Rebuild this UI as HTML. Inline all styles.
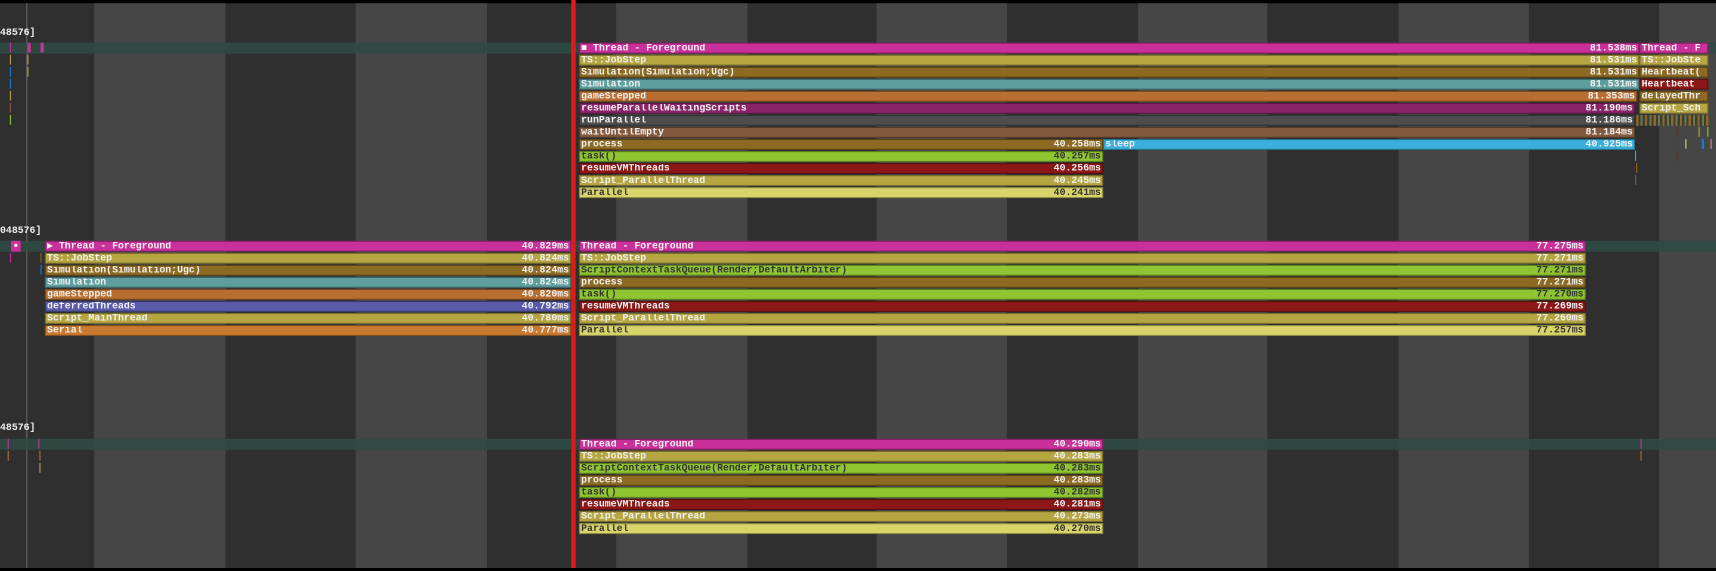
<!DOCTYPE html>
<html><head><meta charset="utf-8"><style>
html,body{margin:0;padding:0;background:#000;overflow:hidden}
#wrap{position:absolute;left:0;top:0;width:1716px;height:571px;overflow:hidden;background:#000}
#s{position:absolute;left:0;top:0;width:1568px;height:522px;transform:scale(1.0944,1.0944);transform-origin:0 0;overflow:hidden}
#bg2{position:absolute;left:0;top:3px;width:1568px;height:516px;background:#2f2f2f}
.L{position:absolute;top:3px;height:516px;background:#464646}
.b{position:absolute;height:10px;box-sizing:border-box;border:1px solid rgba(0,0,0,.35);font:bold 9px/8px "Liberation Mono",monospace;color:#f2f2f2;white-space:nowrap;overflow:hidden;padding-left:1px}
.b i{font-style:normal;position:absolute;right:1px;top:0}
.d{color:#333}
.t{position:absolute;left:0;height:10px;width:1568px;background:#2f4a44;opacity:.9}
.lbl{position:absolute;left:0;font:bold 9px "Liberation Mono",monospace;color:#eee}
.v{position:absolute;width:1px;height:9px}
.pk{background:#c9309a}.ol{background:#b5a642}.br{background:#8c6a22}.tl{background:#5e9e9e}.or{background:#b86e30}.pu{background:#8a2468}.gy{background:#4d4d4d}.wu{background:#845a3e}.gr{background:#8fc530}.rd{background:#8b1717}.ly{background:#d9d46a}.sk{background:#3aafdc}.dt{background:#5a5aaa}.se{background:#c87a30}
</style></head><body><div id="wrap"><div id="s">
<div id="bg2"></div>
<div class="L" style="left:86px;width:120px"></div>
<div class="L" style="left:325px;width:120px"></div>
<div class="L" style="left:563px;width:120px"></div>
<div class="L" style="left:801px;width:119px"></div>
<div class="L" style="left:1040px;width:118px"></div>
<div class="L" style="left:1278px;width:119px"></div>
<div class="L" style="left:1516px;width:120px"></div>
<div style="position:absolute;left:24px;top:3px;width:1px;height:516px;background:#666"></div>

<div class="lbl" style="top:25px">48576]</div>
<div class="t" style="top:39px"></div>
<div class="v pk" style="left:9px;top:39px"></div><div class="v pk" style="left:25px;top:39px;width:3px"></div><div class="v pk" style="left:37px;top:39px;width:3px"></div>
<div class="v ol" style="left:9px;top:50px"></div><div class="v ol" style="left:25px;top:50px"></div><div class="v ol" style="left:25px;top:61px"></div>
<div class="v" style="left:9px;top:61px;background:#1a7adc"></div><div class="v" style="left:9px;top:72px;background:#1a7adc"></div>
<div class="v ol" style="left:9px;top:83px"></div><div class="v wu" style="left:9px;top:94px"></div><div class="v gr" style="left:9px;top:105px"></div>

<div class="b pk" style="left:529px;top:39px;width:969px">■ Thread - Foreground<i>81.538ms</i></div>
<div class="b ol" style="left:529px;top:50px;width:969px">TS::JobStep<i>81.531ms</i></div>
<div class="b br" style="left:529px;top:61px;width:969px">Simulation(Simulation;Ugc)<i>81.531ms</i></div>
<div class="b tl" style="left:529px;top:72px;width:969px">Simulation<i>81.531ms</i></div>
<div class="b or" style="left:529px;top:83px;width:967px">gameStepped<i>81.353ms</i></div>
<div class="b pu" style="left:529px;top:94px;width:965px">resumeParallelWaitingScripts<i>81.190ms</i></div>
<div class="b gy" style="left:529px;top:105px;width:965px">runParallel<i>81.186ms</i></div>
<div class="b wu" style="left:529px;top:116px;width:965px">waitUntilEmpty<i>81.184ms</i></div>
<div class="b br" style="left:529px;top:127px;width:479px">process<i>40.258ms</i></div>
<div class="b sk" style="left:1008px;top:127px;width:486px">sleep<i>40.925ms</i></div>
<div class="b gr d" style="left:529px;top:138px;width:479px">task()<i>40.257ms</i></div>
<div class="b rd" style="left:529px;top:149px;width:479px">resumeVMThreads<i>40.256ms</i></div>
<div class="b ol" style="left:529px;top:160px;width:479px">Script_ParallelThread<i>40.245ms</i></div>
<div class="b ly d" style="left:529px;top:171px;width:479px">Parallel<i>40.241ms</i></div>

<div class="b pk" style="left:1498px;top:39px;width:63px">Thread - F</div>
<div class="b ol" style="left:1498px;top:50px;width:63px">TS::JobSte</div>
<div class="b br" style="left:1498px;top:61px;width:63px">Heartbeat(</div>
<div class="b rd" style="left:1498px;top:72px;width:63px">Heartbeat</div>
<div class="b br" style="left:1498px;top:83px;width:63px">delayedThr</div>
<div class="b ol" style="left:1498px;top:94px;width:63px">Script_Sch</div>
<div style="position:absolute;left:1495px;top:105px;width:66px;height:10px;background:repeating-linear-gradient(90deg,#8c6a22 0 2px,#3d3d3d 2px 4px,#6b7a3a 4px 6px,#3d3d3d 6px 8px)"></div>
<div class="v rd" style="left:1532px;top:116px"></div><div class="v ol" style="left:1552px;top:116px"></div><div class="v gr" style="left:1560px;top:116px"></div>
<div class="v ly" style="left:1540px;top:127px"></div><div class="v" style="left:1555px;top:127px;background:#1a7adc;width:2px"></div><div class="v" style="left:1563px;top:127px;background:#d88"></div>
<div class="v rd" style="left:1532px;top:138px"></div>
<div class="v sk" style="left:1494px;top:138px"></div><div class="v br" style="left:1495px;top:149px"></div><div class="v dt" style="left:1494px;top:160px"></div>

<div class="lbl" style="top:206px">048576]</div>
<div class="t" style="top:220px"></div>
<div style="position:absolute;left:10px;top:220px;width:9px;height:10px;background:#c9309a;color:#fff;font:7px/10px sans-serif;text-align:center">●</div>
<div class="v pk" style="left:9px;top:231px"></div><div class="v br" style="left:37px;top:231px"></div><div class="v" style="left:37px;top:242px;background:#1a7adc"></div>
<div class="b pk" style="left:41px;top:220px;width:481px">▶ Thread - Foreground<i>40.829ms</i></div>
<div class="b ol" style="left:41px;top:231px;width:481px">TS::JobStep<i>40.824ms</i></div>
<div class="b br" style="left:41px;top:242px;width:481px">Simulation(Simulation;Ugc)<i>40.824ms</i></div>
<div class="b tl" style="left:41px;top:253px;width:481px">Simulation<i>40.824ms</i></div>
<div class="b or" style="left:41px;top:264px;width:481px">gameStepped<i>40.820ms</i></div>
<div class="b dt" style="left:41px;top:275px;width:481px">deferredThreads<i>40.792ms</i></div>
<div class="b ol" style="left:41px;top:286px;width:481px">Script_MainThread<i>40.780ms</i></div>
<div class="b se" style="left:41px;top:297px;width:481px">Serial<i>40.777ms</i></div>

<div class="b pk" style="left:529px;top:220px;width:920px">Thread - Foreground<i>77.275ms</i></div>
<div class="b ol" style="left:529px;top:231px;width:920px">TS::JobStep<i>77.271ms</i></div>
<div class="b gr d" style="left:529px;top:242px;width:920px">ScriptContextTaskQueue(Render;DefaultArbiter)<i>77.271ms</i></div>
<div class="b br" style="left:529px;top:253px;width:920px">process<i>77.271ms</i></div>
<div class="b gr d" style="left:529px;top:264px;width:920px">task()<i>77.270ms</i></div>
<div class="b rd" style="left:529px;top:275px;width:920px">resumeVMThreads<i>77.269ms</i></div>
<div class="b ol" style="left:529px;top:286px;width:920px">Script_ParallelThread<i>77.260ms</i></div>
<div class="b ly d" style="left:529px;top:297px;width:920px">Parallel<i>77.257ms</i></div>

<div class="lbl" style="top:386px">48576]</div>
<div class="t" style="top:401px"></div>
<div class="v pk" style="left:7px;top:401px"></div><div class="v pk" style="left:35px;top:401px"></div>
<div class="v or" style="left:7px;top:412px"></div><div class="v or" style="left:36px;top:412px"></div><div class="v ol" style="left:36px;top:423px"></div>
<div class="v or" style="left:1499px;top:412px"></div><div class="v pk" style="left:1499px;top:401px"></div>
<div class="b pk" style="left:529px;top:401px;width:479px">Thread - Foreground<i>40.290ms</i></div>
<div class="b ol" style="left:529px;top:412px;width:479px">TS::JobStep<i>40.283ms</i></div>
<div class="b gr d" style="left:529px;top:423px;width:479px">ScriptContextTaskQueue(Render;DefaultArbiter)<i>40.283ms</i></div>
<div class="b br" style="left:529px;top:434px;width:479px">process<i>40.283ms</i></div>
<div class="b gr d" style="left:529px;top:445px;width:479px">task()<i>40.282ms</i></div>
<div class="b rd" style="left:529px;top:456px;width:479px">resumeVMThreads<i>40.281ms</i></div>
<div class="b ol" style="left:529px;top:467px;width:479px">Script_ParallelThread<i>40.273ms</i></div>
<div class="b ly d" style="left:529px;top:478px;width:479px">Parallel<i>40.270ms</i></div>

<div style="position:absolute;left:522px;top:0;width:4px;height:519px;background:#e0191b"></div>
</div></div></body></html>
